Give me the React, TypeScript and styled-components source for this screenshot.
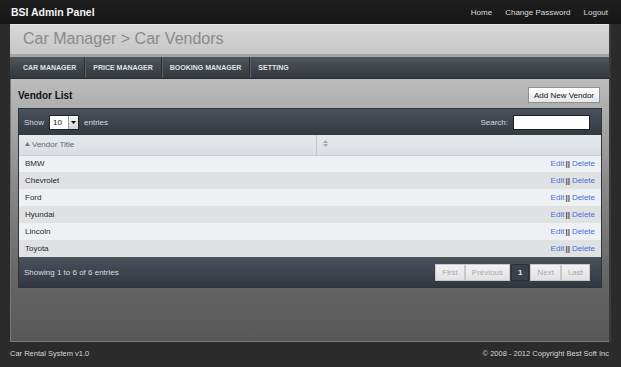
import { createGlobalStyle } from 'styled-components';
import styled from 'styled-components';

const vendors = ['BMW', 'Chevrolet', 'Ford', 'Hyundai', 'Lincoln', 'Toyota'];

const GlobalStyle = createGlobalStyle`
  body {
    margin: 0;
    background: #2a2a2a;
    font-family: "Liberation Sans", Arial, sans-serif;
  }
`;

const App = () => {
  return (
    <Page>
      <GlobalStyle />
      <TopBar>
        <Brand>BSI Admin Panel</Brand>
        <TopLinks>
          <TopLink>Home</TopLink>
          <TopLink>Change Password</TopLink>
          <TopLink>Logout</TopLink>
        </TopLinks>
      </TopBar>

      <Frame>
        <PageHeader>Car Manager &gt; Car Vendors</PageHeader>
        <Nav>
          <NavItem>CAR MANAGER</NavItem>
          <NavItem>PRICE MANAGER</NavItem>
          <NavItem>BOOKING MANAGER</NavItem>
          <NavItem $last>SETTING</NavItem>
        </Nav>

        <Content>
          <ContentHead>
            <Heading>Vendor List</Heading>
            <AddButton>Add New Vendor</AddButton>
          </ContentHead>

          <TableBox>
            <Toolbar>
              <ToolGroup>
                Show
                <Select>
                  <SelectValue>10</SelectValue>
                  <SelectArrow>
                    <svg width="5" height="3" viewBox="0 0 5 3">
                      <path d="M0 0h5L2.5 3z" fill="#111" />
                    </svg>
                  </SelectArrow>
                </Select>
                entries
              </ToolGroup>
              <ToolGroup>
                Search:
                <SearchInput />
              </ToolGroup>
            </Toolbar>

            <Grid>
              <thead>
                <tr>
                  <Th $w={297}>
                    <svg width="5" height="4" viewBox="0 0 5 4">
                      <path d="M2.5 0L5 4H0z" fill="#777" />
                    </svg>
                    Vendor Title
                  </Th>
                  <Th $last>
                    <svg width="5" height="7" viewBox="0 0 5 7">
                      <path d="M2.5 0L5 3H0zM0 4h5L2.5 7z" fill="#aaa" />
                    </svg>
                  </Th>
                </tr>
              </thead>
              <tbody>
                {vendors.map((v, i) => (
                  <Row key={v} $alt={i % 2 === 1}>
                    <NameCell>{v}</NameCell>
                    <ActionCell>
                      <ActionLink>Edit</ActionLink>
                      <Bars>||</Bars>
                      <ActionLink>Delete</ActionLink>
                    </ActionCell>
                  </Row>
                ))}
              </tbody>
            </Grid>

            <TableFoot>
              <span>Showing 1 to 6 of 6 entries</span>
              <Pager>
                <PageButton>First</PageButton>
                <PageButton>Previous</PageButton>
                <PageButton $current>1</PageButton>
                <PageButton>Next</PageButton>
                <PageButton>Last</PageButton>
              </Pager>
            </TableFoot>
          </TableBox>
        </Content>
      </Frame>

      <Footer>
        <span>Car Rental System v1.0</span>
        <span>© 2008 - 2012 Copyright Best Soft Inc</span>
      </Footer>
    </Page>
  );
};

export default App;

const Page = styled.div`
  width: 621px;
  min-height: 367px;
  background: #2b2b2b;
`;

const TopBar = styled.div`
  display: flex;
  justify-content: space-between;
  align-items: center;
  height: 24px;
  padding: 0 13px 0 11px;
  background: linear-gradient(#1e1e1e, #161616);
`;

const Brand = styled.span`
  font-size: 10.5px;
  font-weight: bold;
  color: #f4f4f4;
`;

const TopLinks = styled.div`
  display: flex;
  gap: 13px;
`;

const TopLink = styled.span`
  font-size: 8px;
  color: #dcdcdc;
`;

const Frame = styled.div`
  margin: 0 10px;
  border-right: 2px solid #3a3a3a;
`;

const PageHeader = styled.div`
  box-sizing: border-box;
  height: 33px;
  display: flex;
  align-items: center;
  padding: 0 0 2px 13px;
  font-size: 16px;
  color: #8a8a8a;
  background: linear-gradient(#d6d6d6, #c8c8c8);
  border-top: 1px solid #e4e4e4;
  border-bottom: 3px solid #a4a4a4;
`;

const Nav = styled.div`
  display: flex;
  align-items: stretch;
  height: 21px;
  padding-left: 5px;
  background: linear-gradient(#50565c, #33373c);
  border-bottom: 1px solid #2a2d31;
`;

const NavItem = styled.div<{ $last?: boolean }>`
  display: flex;
  align-items: center;
  padding: 0 8px;
  font-size: 7px;
  font-weight: bold;
  color: #dfe2e5;
  border-right: ${p => (p.$last ? 'none' : '1px solid #2b2e32')};
  box-shadow: ${p => (p.$last ? 'none' : '1px 0 0 #5b6167')};
`;

const Content = styled.div`
  padding: 8px 7px 53px;
  background: linear-gradient(#bcbcbc 0%, #8a8a8a 40%, #666 75%, #585858 100%);
  border-left: 1px solid #777;
  border-bottom: 1px solid #7a7a7a;
`;

const ContentHead = styled.div`
  display: flex;
  justify-content: space-between;
  align-items: center;
  height: 16px;
  margin-bottom: 5px;
`;

const Heading = styled.span`
  font-size: 10px;
  font-weight: bold;
  color: #111;
`;

const AddButton = styled.button`
  height: 16px;
  margin-right: 2px;
  padding: 0 5px;
  font-family: inherit;
  font-size: 8px;
  color: #111;
  background: linear-gradient(#ffffff, #e6e6e6);
  border: 1px solid #8f8f8f;
  border-radius: 0;
`;

const TableBox = styled.div`
  border: 1px solid #2f343a;
`;

const Toolbar = styled.div`
  display: flex;
  justify-content: space-between;
  align-items: center;
  height: 26px;
  padding: 0 11px 0 5px;
  background: linear-gradient(#49515b, #333a42);
  font-size: 8px;
  color: #d8dbde;
`;

const ToolGroup = styled.div`
  display: flex;
  align-items: center;
  gap: 5px;
`;

const Select = styled.div`
  display: flex;
  width: 28px;
  height: 13px;
  border: 1px solid #222;
  background: #fff;
`;

const SelectValue = styled.span`
  flex: 1;
  padding-left: 3px;
  font-size: 8px;
  line-height: 13px;
  color: #111;
`;

const SelectArrow = styled.span`
  width: 9px;
  display: flex;
  align-items: center;
  justify-content: center;
  background: linear-gradient(#f4f4f4, #d4d4d4);
  border-left: 1px solid #999;
`;

const SearchInput = styled.div`
  width: 75px;
  height: 13px;
  background: #fff;
  border: 1px solid #1e1e1e;
`;

const Grid = styled.table`
  width: 100%;
  border-collapse: collapse;
  font-size: 8px;
`;

const Th = styled.th<{ $w?: number; $last?: boolean }>`
  box-sizing: border-box;
  width: ${p => (p.$w ? `${p.$w}px` : 'auto')};
  height: 20px;
  padding: 0 0 0 6px;
  text-align: left;
  font-weight: normal;
  color: #666;
  background: linear-gradient(#e7eaed, #d9dde1);
  border-right: ${p => (p.$last ? 'none' : '1px solid #c4c8cc')};
  border-bottom: 1px solid #c9cdd1;

  svg {
    margin-right: 2px;
    vertical-align: 1px;
  }
`;

const Row = styled.tr<{ $alt: boolean }>`
  height: 17px;
  background: ${p => (p.$alt ? '#dfe1e3' : '#eef1f3')};
`;

const NameCell = styled.td`
  padding: 0 0 0 6px;
  color: #2a2a2a;
`;

const ActionCell = styled.td`
  padding: 0 6px 0 0;
  text-align: right;
`;

const ActionLink = styled.span`
  color: #4b6fd9;
`;

const Bars = styled.span`
  margin: 0 2px 0 1px;
  font-weight: bold;
  color: #444;
`;

const TableFoot = styled.div`
  display: flex;
  justify-content: space-between;
  align-items: center;
  height: 29px;
  padding: 0 11px 0 5px;
  background: linear-gradient(#48505a, #323840);
  font-size: 8px;
  color: #dadde0;
  border-top: 1px solid #555;
`;

const Pager = styled.div`
  display: flex;
`;

const PageButton = styled.span<{ $current?: boolean }>`
  height: 15px;
  padding: 0 6px;
  display: flex;
  align-items: center;
  font-size: 8px;
  font-weight: ${p => (p.$current ? 'bold' : 'normal')};
  color: ${p => (p.$current ? '#e8e8e8' : '#a9a9a9')};
  background: ${p => (p.$current ? '#3a414a' : 'linear-gradient(#f2f2f2, #e2e2e2)')};
  border: 1px solid ${p => (p.$current ? '#2c3138' : '#c9c9c9')};
  margin: ${p => (p.$current ? '0 1px' : '0')};
`;

const Footer = styled.div`
  display: flex;
  justify-content: space-between;
  align-items: center;
  height: 22px;
  padding: 0 12px 0 10px;
  font-size: 7.5px;
  color: #d6d6d6;
`;
